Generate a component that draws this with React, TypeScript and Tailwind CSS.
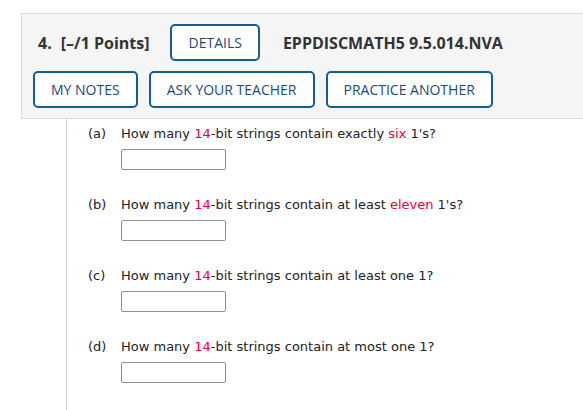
const questions = [
  { label: "(a)", before: "-bit strings contain exactly ", red: "six", after: " 1's?" },
  { label: "(b)", before: "-bit strings contain at least ", red: "eleven", after: " 1's?" },
  { label: "(c)", before: "-bit strings contain at least one 1?", red: "", after: "" },
  { label: "(d)", before: "-bit strings contain at most one 1?", red: "", after: "" },
];

function OutlineButton({ children }: { children: React.ReactNode }) {
  return (
    <button className="h-[37px] rounded-[5px] border-2 border-[#0f5f96] bg-white px-[16px] text-[14px] leading-none text-[#1d4a73]">
      {children}
    </button>
  );
}

export default function App() {
  return (
    <div className="min-h-[410px] bg-white pt-[13px] font-['Open_Sans',sans-serif]">
      <div className="ml-[21px] border-y border-l border-[#dcdcdc] bg-[#f5f5f5] pb-[10px] pl-[11px] pt-[10px]">
        <div className="flex items-center">
          <span className="ml-[5px] text-[16px] font-bold text-[#333]">4.</span>
          <span className="ml-[9px] text-[16px] font-bold text-[#333]">[–/1 Points]</span>
          <div className="ml-[21px]">
            <OutlineButton>DETAILS</OutlineButton>
          </div>
          <span className="ml-[23px] text-[16px] font-bold text-[#333]">EPPDISCMATH5 9.5.014.NVA</span>
        </div>
        <div className="mt-[10px] flex gap-[11px]">
          <OutlineButton>MY NOTES</OutlineButton>
          <OutlineButton>ASK YOUR TEACHER</OutlineButton>
          <OutlineButton>PRACTICE ANOTHER</OutlineButton>
        </div>
      </div>

      <div className="ml-[66px] min-h-[292px] border-l border-[#cccccc] pl-[21px] pt-[7px] font-['DejaVu_Sans',Verdana,sans-serif] text-[13px] text-[#222]">
        {questions.map((q) => (
          <div key={q.label} className="mb-[27px] flex">
            <span className="w-[33px] shrink-0 leading-4">{q.label}</span>
            <div>
              <p className="leading-4">
                How many <span className="text-[#e4003a]">14</span>
                {q.before}
                {q.red && <span className="text-[#e4003a]">{q.red}</span>}
                {q.after}
              </p>
              <input
                type="text"
                className="mt-[7px] block h-[21px] w-[105px] rounded-[2px] border border-[#8f8f8f] bg-white"
              />
            </div>
          </div>
        ))}
      </div>
    </div>
  );
}
